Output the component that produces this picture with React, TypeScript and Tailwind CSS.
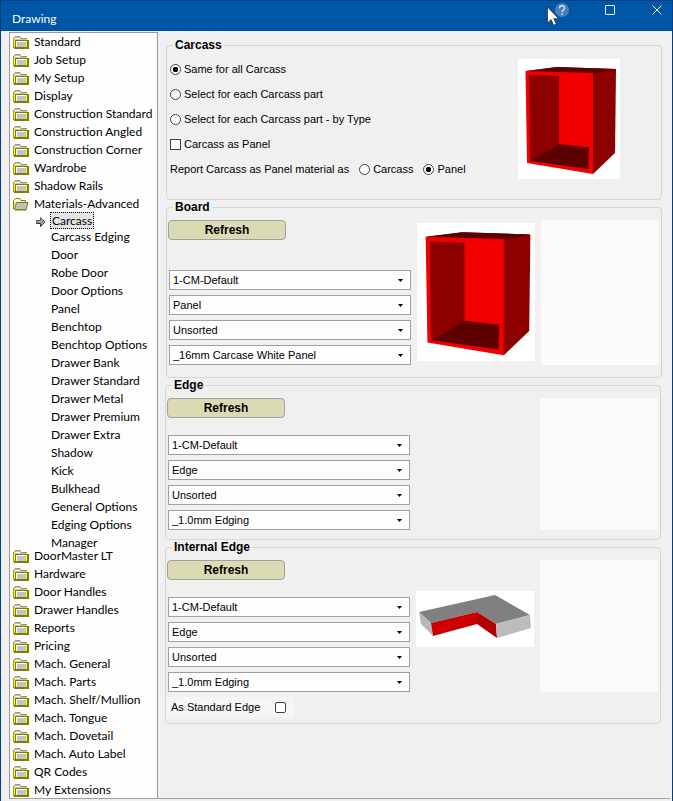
import * as React from 'react';
import { clsx } from 'clsx';

const foldersTop = [
  'Standard',
  'Job Setup',
  'My Setup',
  'Display',
  'Construction Standard',
  'Construction Angled',
  'Construction Corner',
  'Wardrobe',
  'Shadow Rails',
];

const materialPages = [
  'Carcass',
  'Carcass Edging',
  'Door',
  'Robe Door',
  'Door Options',
  'Panel',
  'Benchtop',
  'Benchtop Options',
  'Drawer Bank',
  'Drawer Standard',
  'Drawer Metal',
  'Drawer Premium',
  'Drawer Extra',
  'Shadow',
  'Kick',
  'Bulkhead',
  'General Options',
  'Edging Options',
  'Manager',
];

const foldersBottom = [
  'DoorMaster LT',
  'Hardware',
  'Door Handles',
  'Drawer Handles',
  'Reports',
  'Pricing',
  'Mach. General',
  'Mach. Parts',
  'Mach. Shelf/Mullion',
  'Mach. Tongue',
  'Mach. Dovetail',
  'Mach. Auto Label',
  'QR Codes',
  'My Extensions',
];

export default function App() {
  return (
    <div className="flex h-screen flex-col overflow-hidden border-x border-[#003f7d] bg-[#f0f0f0] font-['Liberation_Sans',sans-serif] text-[11px] text-black">
      <TitleBar />
      <div className="flex min-h-0 flex-1 pl-2">
        <Sidebar />
        <main className="min-w-0 flex-1 pt-[7px]">
          <div className="ml-2 mr-[10px]">
            <CarcassGroup />
            <Group title="Board">
              <MaterialRow
                name="Board"
                values={['1-CM-Default', 'Panel', 'Unsorted', '_16mm Carcase White Panel']}
                tall
                drawing={<CabinetDrawing className="mt-[3px] h-[138px] w-full bg-white" />}
              />
              <div className="h-3" />
            </Group>
          </div>
          <div className="ml-[7px] mr-[11px]">
            <Group title="Edge">
              <MaterialRow name="Edge" values={['1-CM-Default', 'Edge', 'Unsorted', '_1.0mm Edging']} />
              <div className="h-[9px]" />
            </Group>
            <Group title="Internal Edge">
              <MaterialRow
                name="Internal edge"
                values={['1-CM-Default', 'Edge', 'Unsorted', '_1.0mm Edging']}
                drawing={<BenchDrawing />}
              />
              <label className="mt-[5px] mb-[6px] flex h-5 w-[127px] items-center justify-between bg-[#f5f5f5] pr-2 pl-1">
                As Standard Edge
                <CheckBox rounded />
              </label>
            </Group>
          </div>
        </main>
      </div>
      <div className="mr-[2px] ml-2 h-[3px] shrink-0 border-t border-[#a0a0a0]" />
    </div>
  );
}

function TitleBar() {
  return (
    <header className="flex h-[31px] shrink-0 items-start justify-between border-t border-[#003f7d] bg-[#0056a6] text-white">
      <h1 className="pt-[9px] pl-[11px] font-[Lato,sans-serif] text-[12px] leading-[18px]">Drawing</h1>
      <div className="flex items-start">
        <button aria-label="Help" className="mr-[34px] h-[26px] w-7">
          <svg viewBox="0 0 28 26" className="h-[26px] w-7">
            <circle cx="19" cy="9" r="7" fill="#4a80b8" />
            <path d="M16.500 7.200c0-3.300 5-3.300 5-.2 0 2-2.400 2-2.400 4.200M19.100 12.600v1.400" fill="none" stroke="#e8f0f8" strokeWidth="1.2" />
            <path d="M4.500 6v16l3.600-3.400 2.600 5.700 2.600-1.200-2.600-5.400h4.900z" fill="#fff" stroke="#333" strokeWidth=".8" />
          </svg>
        </button>
        <button aria-label="Maximize" className="mr-[37px] pt-1">
          <svg viewBox="0 0 10 10" className="size-[10px]">
            <rect x=".5" y=".5" width="9" height="9" rx=".6" fill="none" stroke="#fff" />
          </svg>
        </button>
        <button aria-label="Close" className="mr-[10px] pt-1">
          <svg viewBox="0 0 10 10" className="size-[10px]">
            <path d="M.7.7l8.600 8.600M9.300.7L.7 9.300" stroke="#fff" />
          </svg>
        </button>
      </div>
    </header>
  );
}

function Sidebar() {
  return (
    <nav className="mt-px w-[149px] shrink-0 overflow-hidden border border-b-0 border-[#9a9a9a] bg-[#fdfdfd] font-[Lato,sans-serif] text-[12px] whitespace-nowrap">
      {foldersTop.map((name) => (
        <Folder key={name} name={name} />
      ))}
      <Folder name="Materials-Advanced" open />
      <ul>
        {materialPages.map((name, idx) => (
          <li
            key={name}
            className={clsx(
              'flex pl-[41px]',
              idx === 0 ? 'h-[15px] items-center' : name === 'Manager' ? 'h-[13px] items-start' : 'h-[18px] items-center',
            )}
          >
            {idx === 0 && <ArrowIcon />}
            <a
              href="#"
              className={clsx(
                idx === 0
                  ? '-ml-px border border-dotted border-black bg-[#e4e4e4] px-px leading-[15px]'
                  : 'leading-[18px]',
              )}
            >
              {name}
            </a>
          </li>
        ))}
      </ul>
      {foldersBottom.map((name) => (
        <Folder key={name} name={name} />
      ))}
    </nav>
  );
}

function Folder({ name, open }: { name: string; open?: boolean }) {
  return (
    <a href="#" className="flex h-[18px] items-center gap-[5px] pl-[3px] leading-[18px]">
      {open ? <FolderOpenIcon /> : <FolderIcon />}
      {name}
    </a>
  );
}

function FolderIcon() {
  return (
    <svg viewBox="0 0 16 14" className="h-[14px] w-4 shrink-0" shapeRendering="crispEdges">
      <path d="M0 3h1V2h1V1h5v1h1v1h6v2h1v8H0z" fill="#c4c4c4" />
      <path d="M0 3h1v10H0zM1 2h1v1H1zM2 1h5v1H2zM7 2h1v1H7zM8 3h6v1H8z" fill="#9a9a40" />
      <path d="M1 4h1v8H1z" fill="#ffff00" />
      <path d="M2 3h5v1H2zM3 6h10v1H3zM3 7h1v5H3z" fill="#fff" />
      <path d="M2 5h13v1H2zM2 6h1v6H2z" fill="#808000" />
      <path d="M13 6h1v6h-1z" fill="#ffff00" />
      <path d="M14 5h2v9H1v-2h13z" fill="#808000" />
    </svg>
  );
}

function FolderOpenIcon() {
  return (
    <svg viewBox="0 0 16 14" className="h-[14px] w-4 shrink-0">
      <path d="M.5 12V3.500l2-2h4l1.500 2h4.500V5.500" fill="#f4f4e0" stroke="#808000" />
      <path d="M3.500 5.500H15l-2 7H1.500z" fill="#c0c0c0" stroke="#808000" />
      <path d="M1.500 4v6" stroke="#e8e840" />
      <path d="M2 13h11.500" stroke="#808000" />
    </svg>
  );
}

function ArrowIcon() {
  return (
    <svg viewBox="0 0 10 10" className="-ml-[15px] mr-[5px] size-[10px] shrink-0 translate-y-px">
      <path d="M.5 3.500h4v-3L9 5 4.500 9.500v-3h-4z" fill="#a0a0a0" stroke="#606060" />
      <path d="M.5 6.500h4v3L9 5" fill="none" stroke="#303a30" />
    </svg>
  );
}

function Group({ title, children }: { title: string; children: React.ReactNode }) {
  return (
    <fieldset className="min-w-0 rounded border border-[#d5d5d5] pl-px">
      <legend className="ml-[5px] px-[2px] text-[12px] leading-[14px] font-bold">{title}</legend>
      {children}
    </fieldset>
  );
}

function CarcassGroup() {
  return (
    <Group title="Carcass">
      <div className="flex items-start justify-between pt-[5px] pr-[41px] pb-[17px] pl-[2px]">
        <div>
          <Radio name="mode" label="Same for all Carcass" defaultChecked />
          <Radio name="mode" label="Select for each Carcass part" />
          <Radio name="mode" label="Select for each Carcass part - by Type" />
          <label className="flex h-[25px] items-center gap-[3px]">
            <CheckBox />
            Carcass as Panel
          </label>
          <div className="flex items-center gap-[10px]" role="radiogroup" aria-label="Report Carcass as Panel material as">
            <span>Report Carcass as Panel material as</span>
            <Radio name="report" label="Carcass" />
            <Radio name="report" label="Panel" defaultChecked />
          </div>
        </div>
        <CabinetDrawing className="mt-[2px] h-[120px] w-[102px] bg-white" />
      </div>
    </Group>
  );
}

function Radio({ name, label, defaultChecked }: { name: string; label: string; defaultChecked?: boolean }) {
  return (
    <label className="flex h-[25px] items-center gap-[3px] whitespace-nowrap">
      <input
        type="radio"
        name={name}
        defaultChecked={defaultChecked}
        className="size-[11px] shrink-0 appearance-none rounded-full border border-[#404040] bg-white checked:bg-[radial-gradient(circle,#000_0_2.500px,#fff_3px)]"
      />
      {label}
    </label>
  );
}

function CheckBox({ rounded }: { rounded?: boolean }) {
  return (
    <input
      type="checkbox"
      className={clsx(
        'size-[11px] shrink-0 appearance-none border border-[#404040] bg-white checked:bg-[#404040]',
        rounded && 'rounded-[2px]',
      )}
    />
  );
}

function MaterialRow({
  name,
  values,
  drawing,
  tall,
}: {
  name: string;
  values: string[];
  drawing?: React.ReactNode;
  tall?: boolean;
}) {
  return (
    <div className="flex items-stretch gap-[6px] pt-[6px] pr-[2px]">
      <div className="min-w-0 flex-1">
        <button
          className={clsx(
            'block h-5 w-[118px] rounded border border-[#a0a0a0] bg-[#dbdbb3] text-[12px] leading-[18px] font-bold',
            tall ? 'mb-[30px]' : 'mb-[17px]',
          )}
        >
          Refresh
        </button>
        <div className="flex flex-col gap-[5px] pl-px">
          {values.map((value, idx) => (
            <Combo key={idx} label={`${name} ${idx + 1}`} value={value} />
          ))}
        </div>
      </div>
      <div className="flex w-[118px] shrink-0 flex-col">{drawing}</div>
      <div className="w-[118px] shrink-0 bg-[#fafaf8]" />
    </div>
  );
}

function Combo({ label, value }: { label: string; value: string }) {
  return (
    <div className="grid">
      <select
        aria-label={label}
        className="col-start-1 row-start-1 h-5 w-full appearance-none border border-[#a0a0a0] bg-[#fdfdfd] pl-[3px] text-[11px] leading-[18px]"
      >
        <option>{value}</option>
      </select>
      <svg viewBox="0 0 5 3" className="pointer-events-none col-start-1 row-start-1 mr-2 h-[3px] w-[5px] self-center justify-self-end">
        <path d="M0 0h5L2.500 3z" />
      </svg>
    </div>
  );
}

function CabinetDrawing({ className }: { className: string }) {
  return (
    <svg viewBox="0 0 102 120" preserveAspectRatio="none" className={className}>
      <path d="M8 12l31-4 59 2-1 84-22 21z" fill="#8c0000" />
      <path d="M8 12l31-4 59 2-22 5z" fill="#5c0000" />
      <path d="M7.500 12l67.500 2v101L9 104z" fill="#f00000" />
      <path d="M11 16l30 1v68l-29 17z" fill="#8c0000" />
      <path d="M41 85l30 3.500-.5 21.500L12 102z" fill="#5c0000" />
    </svg>
  );
}

function BenchDrawing() {
  return (
    <svg viewBox="0 0 118 56" className="mt-[31px] h-14 w-full bg-white">
      <path d="M3 21L79 4l35 20-34 9-19-12-46 11z" fill="#808080" />
      <path d="M3 21l12 11 2 13L5 33z" fill="#b8b8b8" />
      <path d="M15 32l46-11v12L17 45z" fill="#cc0000" />
      <path d="M61 21l19 12 1 14-20-14z" fill="#b00000" />
      <path d="M80 33l34-9 1 13-34 10z" fill="#bcbcbc" />
    </svg>
  );
}
